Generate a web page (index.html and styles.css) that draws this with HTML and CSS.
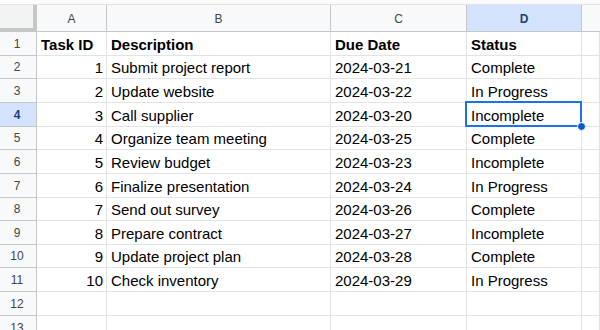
FILE: index.html
```html
<!DOCTYPE html>
<html>
<head>
<meta charset="utf-8">
<link rel="stylesheet" href="styles.css">
</head>
<body>
<div class="topbar"></div>
<div class="sheet">
  <div class="corner"></div>
  <div class="ch">A</div><div class="ch">B</div><div class="ch">C</div><div class="ch ch-sel">D</div><div class="ch ch-e"></div>

  <div class="rh">1</div><div class="c b">Task ID</div><div class="c b">Description</div><div class="c b">Due Date</div><div class="c b">Status</div><div class="c"></div>
  <div class="rh">2</div><div class="c n">1</div><div class="c">Submit project report</div><div class="c">2024-03-21</div><div class="c">Complete</div><div class="c"></div>
  <div class="rh">3</div><div class="c n">2</div><div class="c">Update website</div><div class="c">2024-03-22</div><div class="c">In Progress</div><div class="c"></div>
  <div class="rh rh-sel">4</div><div class="c n">3</div><div class="c">Call supplier</div><div class="c">2024-03-20</div><div class="c sel">Incomplete<span class="handle"></span></div><div class="c"></div>
  <div class="rh">5</div><div class="c n">4</div><div class="c">Organize team meeting</div><div class="c">2024-03-25</div><div class="c">Complete</div><div class="c"></div>
  <div class="rh">6</div><div class="c n">5</div><div class="c">Review budget</div><div class="c">2024-03-23</div><div class="c">Incomplete</div><div class="c"></div>
  <div class="rh">7</div><div class="c n">6</div><div class="c">Finalize presentation</div><div class="c">2024-03-24</div><div class="c">In Progress</div><div class="c"></div>
  <div class="rh">8</div><div class="c n">7</div><div class="c">Send out survey</div><div class="c">2024-03-26</div><div class="c">Complete</div><div class="c"></div>
  <div class="rh">9</div><div class="c n">8</div><div class="c">Prepare contract</div><div class="c">2024-03-27</div><div class="c">Incomplete</div><div class="c"></div>
  <div class="rh">10</div><div class="c n">9</div><div class="c">Update project plan</div><div class="c">2024-03-28</div><div class="c">Complete</div><div class="c"></div>
  <div class="rh">11</div><div class="c n">10</div><div class="c">Check inventory</div><div class="c">2024-03-29</div><div class="c">In Progress</div><div class="c"></div>
  <div class="rh">12</div><div class="c"></div><div class="c"></div><div class="c"></div><div class="c"></div><div class="c"></div>
  <div class="rh">13</div><div class="c"></div><div class="c"></div><div class="c"></div><div class="c"></div><div class="c"></div>
</div>
</body>
</html>
```
FILE: styles.css
```css
* { box-sizing: border-box; }
html, body {
  margin: 0;
  padding: 0;
  background: #ffffff;
  overflow: hidden;
  width: 600px;
  height: 330px;
}
body {
  font-family: "Liberation Sans", Arial, sans-serif;
  color: #000;
}
.topbar {
  height: 5px;
  background: #fbfbfb;
  border-bottom: 1px solid #e3e3e3;
}
.sheet {
  display: grid;
  grid-template-columns: 37px 70px 224px 136px 115px 1fr;
  grid-template-rows: 27px 24px 23px 24px 24px 23px 24px 24px 23px 24px 23px 24px 24px 24px;
}
.corner {
  background: #f1f3f4;
  border-right: 4px solid #c4c7c5;
  border-bottom: 4px solid #c4c7c5;
}
.ch {
  background: #f8f9fa;
  border-right: 1px solid #c4c7c5;
  border-bottom: 1px solid #c4c7c5;
  display: flex;
  align-items: center;
  justify-content: center;
  font-size: 12px;
  color: #444746;
  padding-top: 1px;
}
.ch-sel {
  background: #d3e3fd;
  color: #1f3f7a;
  font-weight: bold;
}
.ch-e { border-right: none; }
.rh {
  background: #f8f9fa;
  border-right: 1px solid #c4c7c5;
  border-bottom: 1px solid #c4c7c5;
  display: flex;
  align-items: center;
  justify-content: center;
  font-size: 12px;
  color: #444746;
  padding-right: 2px;
}
.rh-sel {
  background: #d3e3fd;
  color: #1f3f7a;
  font-weight: bold;
}
.c {
  border-right: 1px solid #e2e3e3;
  border-bottom: 1px solid #e2e3e3;
  display: flex;
  align-items: center;
  padding: 1px 4px 0 4px;
  font-size: 15px;
  white-space: nowrap;
  overflow: visible;
  color: #000;
}
.b { font-weight: bold; }
.n { justify-content: flex-end; padding-right: 3px; }
.sel { position: relative; }
.sel::after {
  content: "";
  position: absolute;
  top: -2px;
  left: -2px;
  right: -1px;
  bottom: -1px;
  border: 2px solid #1a73e8;
  pointer-events: none;
}
.handle {
  position: absolute;
  right: -5px;
  bottom: -5px;
  width: 9px;
  height: 9px;
  border-radius: 50%;
  background: #0b57d0;
  border: 1px solid #ffffff;
  z-index: 2;
}
```
